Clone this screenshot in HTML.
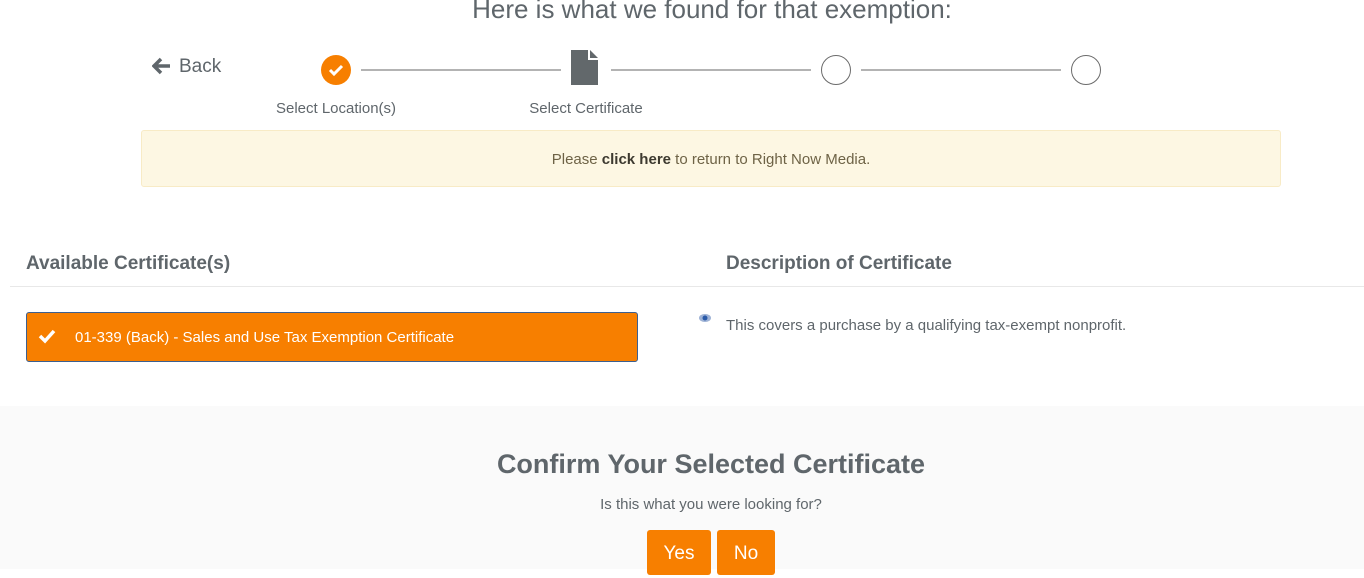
<!DOCTYPE html>
<html><head><style>
body{margin:0;width:1364px;height:569px;overflow:hidden;background:#fff;font-family:"Liberation Sans",sans-serif;color:#5f666b;position:relative}
.a{position:absolute}
.line{position:absolute;top:69px;height:2px;background:#b3b3b3;width:200px}
.c{position:absolute;top:55px;width:28px;height:28px;border:1px solid #6b6b6b;border-radius:50%;background:#fff}
</style></head><body>
<div class="a" style="left:0;width:1424px;text-align:center;top:-6px;font-size:26px;color:#5f666b">Here is what we found for that exemption:</div>
<svg class="a" style="left:152px;top:57px" width="20" height="18" viewBox="0 0 20 18"><path d="M9 2 L2 9 L9 16 M2 9 H18" stroke="#5f666b" stroke-width="3.5" fill="none" stroke-linejoin="miter"/></svg>
<div class="a" style="left:179px;top:56px;font-size:19px">Back</div>
<div class="a" style="left:321px;top:55px;width:30px;height:30px;border-radius:50%;background:#f77f00"></div>
<svg class="a" style="left:327px;top:62px" width="18" height="16" viewBox="0 0 18 16"><path d="M3 8 L7 12 L15 4" stroke="#fff" stroke-width="3" fill="none"/></svg>
<div class="line" style="left:361px"></div>
<svg class="a" style="left:571px;top:50px" width="27" height="35" viewBox="0 0 27 35"><path d="M0 0 H17 V10 H27 V35 H0 Z" fill="#62686b"/><path d="M19 0 L27 8 H19 Z" fill="#62686b"/></svg>
<div class="line" style="left:611px"></div>
<div class="c" style="left:821px"></div>
<div class="line" style="left:861px"></div>
<div class="c" style="left:1071px"></div>
<div class="a" style="left:236px;width:200px;text-align:center;top:100px;font-size:15px">Select Location(s)</div>
<div class="a" style="left:486px;width:200px;text-align:center;top:100px;font-size:15px">Select Certificate</div>
<div class="a" style="left:141px;top:130px;width:1138px;height:55px;background:#fdf7e3;border:1px solid #f8ebc6;border-radius:3px;text-align:center;line-height:57px;font-size:15px;color:#6e6346">Please <b style="color:#3d3a30">click here</b> to return to Right Now Media.</div>
<div class="a" style="left:26px;top:253px;font-size:19px;font-weight:bold">Available Certificate(s)</div>
<div class="a" style="left:726px;top:253px;font-size:19px;font-weight:bold">Description of Certificate</div>
<div class="a" style="left:10px;top:286px;width:1354px;height:1px;background:#e8e8e8"></div>
<div class="a" style="left:26px;top:312px;width:610px;height:48px;background:#f77f00;border:1px solid #3c5f8f;border-radius:3px"></div>
<svg class="a" style="left:38px;top:328px" width="18" height="16" viewBox="0 0 18 16"><path d="M2 8 L7 13 L16 3" stroke="#fff" stroke-width="3.5" fill="none"/></svg>
<div class="a" style="left:75px;top:329px;font-size:15px;color:#fff">01-339 (Back) - Sales and Use Tax Exemption Certificate</div>
<svg class="a" style="left:698px;top:313px" width="14" height="10" viewBox="0 0 14 10"><ellipse cx="7" cy="5" rx="6" ry="4" fill="#9fb3d6"/><circle cx="7" cy="5" r="2.5" fill="#2a5aa8"/></svg>
<div class="a" style="left:726px;top:317px;font-size:15px">This covers a purchase by a qualifying tax-exempt nonprofit.</div>
<div class="a" style="left:0;top:406px;width:1364px;height:163px;background:#fafafa"></div>
<div class="a" style="left:0;width:1422px;text-align:center;top:449px;font-size:27px;font-weight:bold;color:#5f666b">Confirm Your Selected Certificate</div>
<div class="a" style="left:0;width:1422px;text-align:center;top:496px;font-size:15px">Is this what you were looking for?</div>
<div class="a" style="left:647px;top:530px;width:64px;height:45px;background:#f77f00;border-radius:3px;color:#fff;font-size:19px;text-align:center;line-height:48px">Yes</div>
<div class="a" style="left:717px;top:530px;width:58px;height:45px;background:#f77f00;border-radius:3px;color:#fff;font-size:19px;text-align:center;line-height:48px">No</div>
</body></html>
